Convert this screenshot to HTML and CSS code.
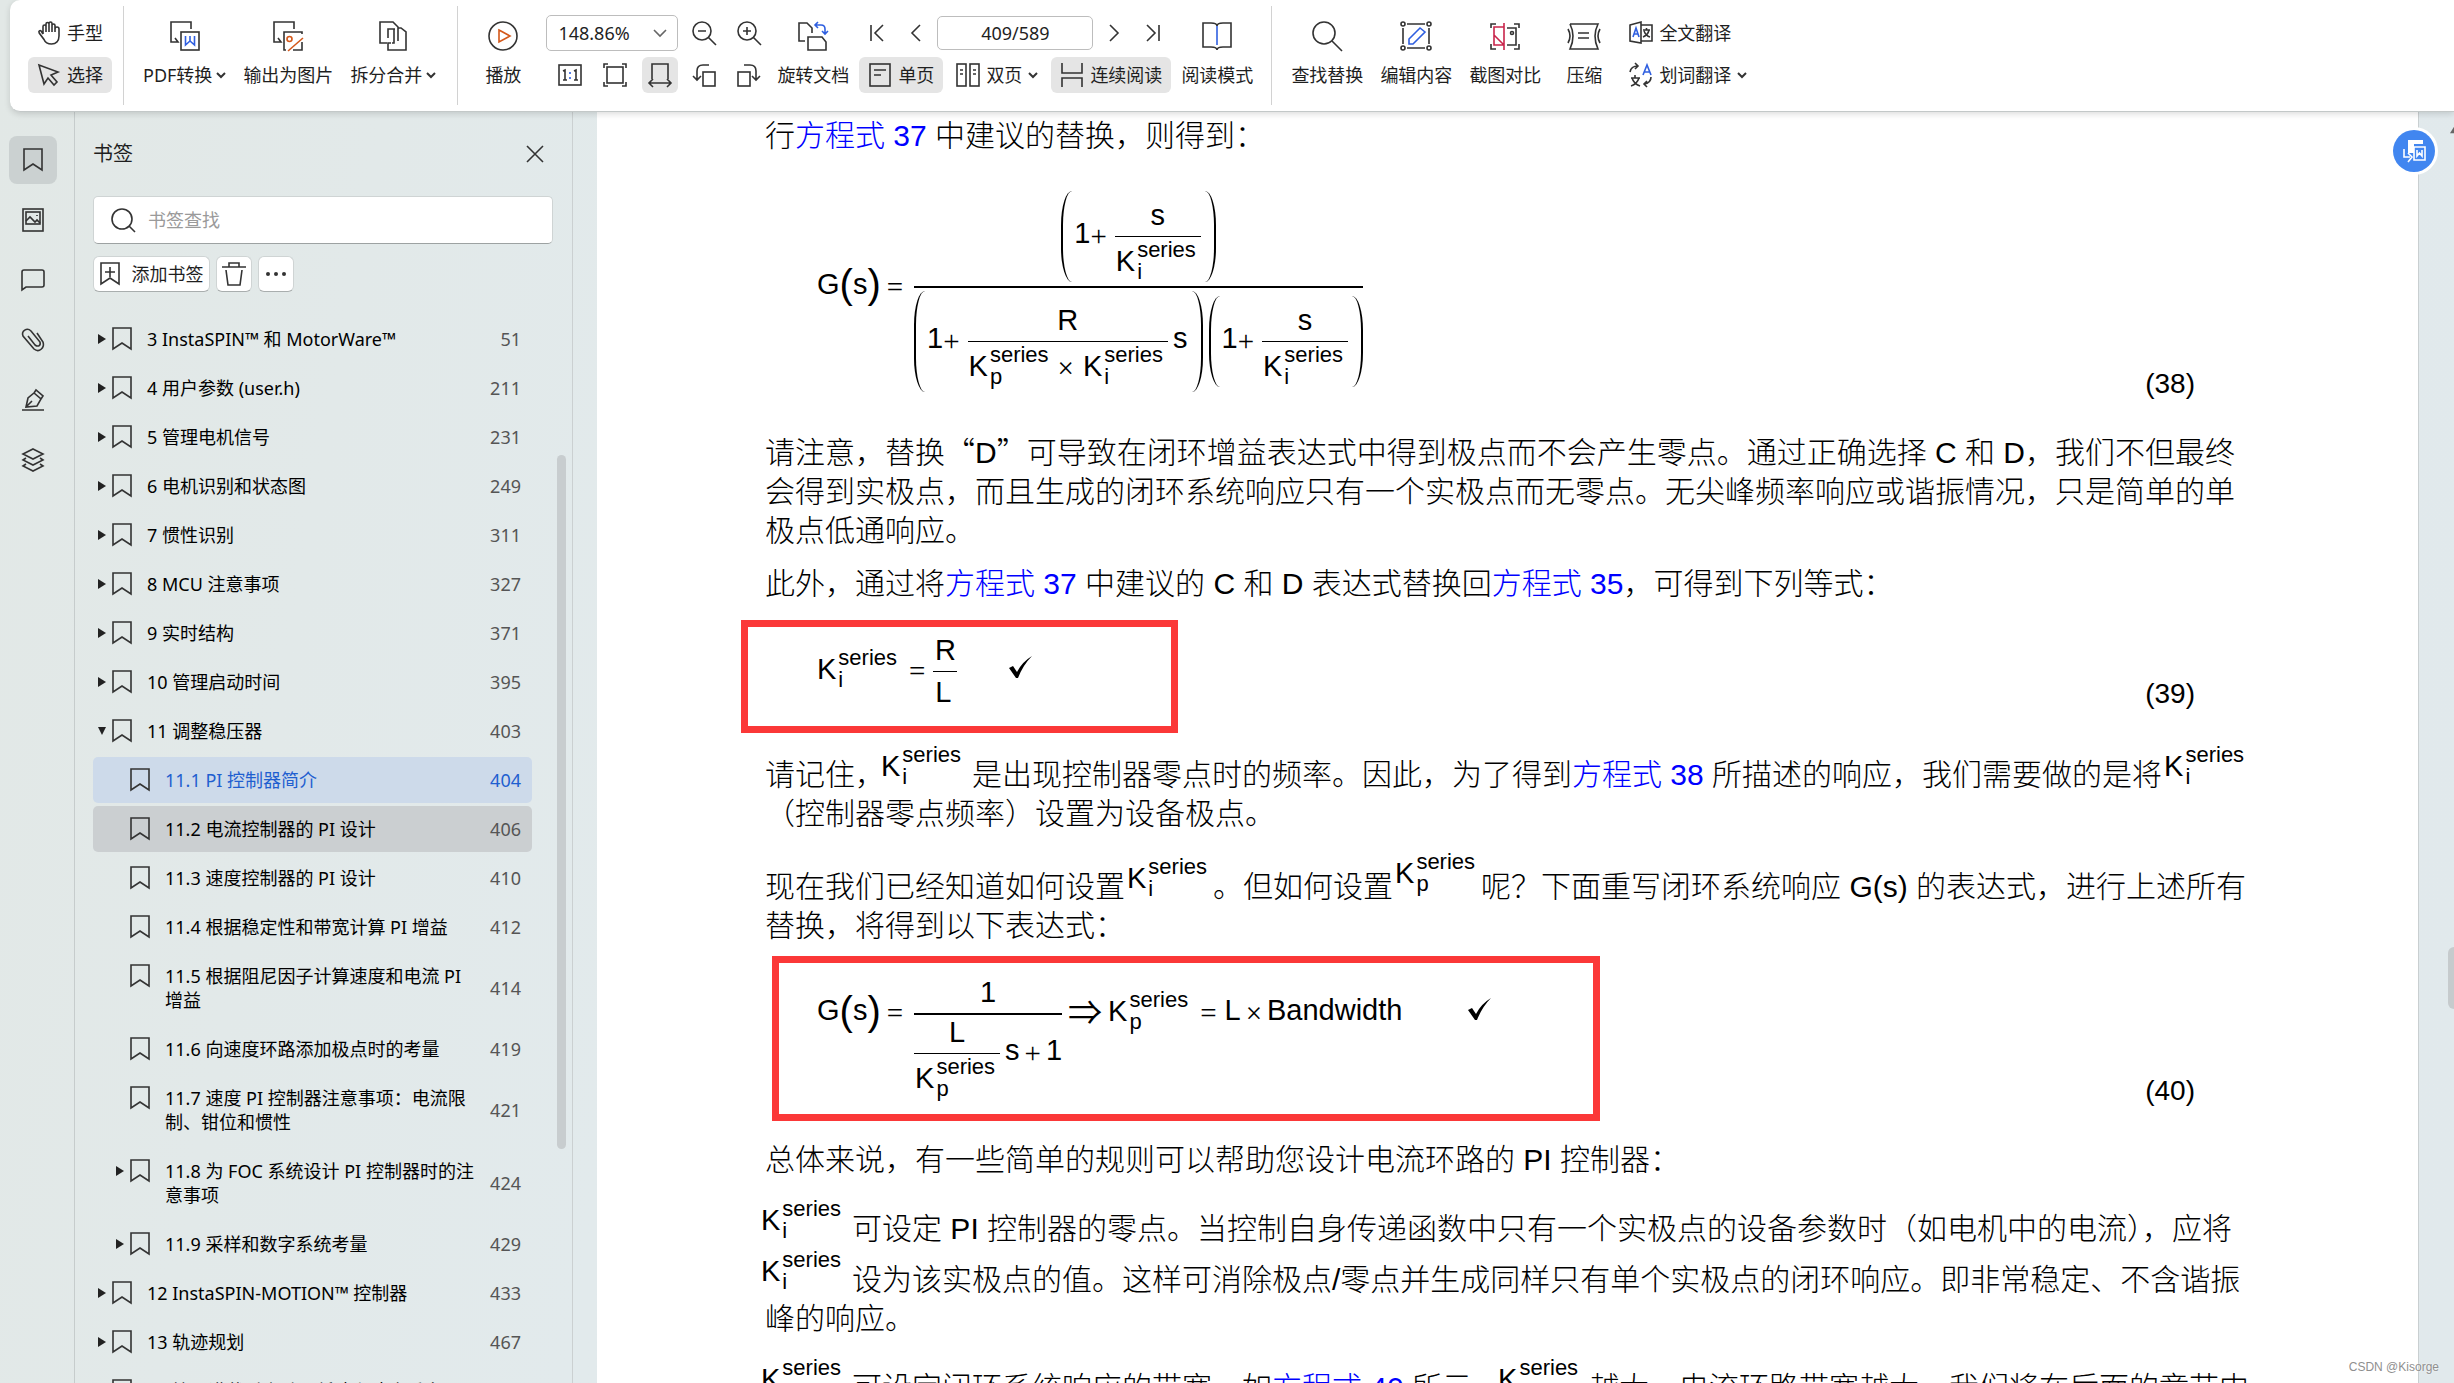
FILE: index.html
```html
<!DOCTYPE html>
<html lang="zh-CN">
<head>
<meta charset="utf-8">
<title>PDF 阅读</title>
<link rel="stylesheet" href="styles.css">
</head>
<body>
<svg class="defs" aria-hidden="true">
  <symbol id="i-mark" viewBox="0 0 20 24"><path d="M1 1h18v21l-9-6-9 6z"/></symbol>
  <symbol id="i-right" viewBox="0 0 8 10"><path d="M0 0l8 5-8 5z"/></symbol>
  <symbol id="i-down" viewBox="0 0 8 10"><path d="M0 1h8l-4 8z"/></symbol>
  <symbol id="i-chev" viewBox="0 0 10 8"><path d="M1 2l4 4 4-4"/></symbol>
</svg>

<header class="toolbar">
  <div class="stack">
    <button class="row-btn"><svg class="i24" viewBox="0 0 24 24"><path d="M6 13V5.500a1.500 1.500 0 0 1 3 0V11V3a1.500 1.500 0 0 1 3 0v8V2.500a1.500 1.500 0 0 1 3 0V11V4.500a1.500 1.500 0 0 1 3 0V11V8a1.500 1.500 0 0 1 4 0v7c0 5-3 8-7.500 8C10 23 8 21 7 18.500L2.200 12c-1-2 .8-3 2-2L6 13"/></svg>手型</button>
    <button class="row-btn is-on"><svg class="i24" viewBox="0 0 24 24"><path d="M2 2l5 19 4-6 6 7 3-3-6-7 7-3z"/></svg>选择</button>
  </div>
  <i class="sep sep-a"></i>
  <button class="big"><svg class="i30" viewBox="0 0 30 30"><path d="M8 21H1V1h20v7M5 17l3 4-3 0"/><rect x="11" y="11" width="18" height="18"/><path class="blue" d="M15.500 15v9l4.500-4 4.500 4v-9M20 15v5"/></svg><span>PDF转换<svg class="chev"><use href="#i-chev"/></svg></span></button>
  <button class="big"><svg class="i30" viewBox="0 0 30 30"><path d="M8 21H1V1h20v7M5 17l3 4-3 0M29 13v-2H11v18h2M20 29h9v-8"/><circle class="orange" cx="16.500" cy="18" r="2.500"/><path class="orange" d="M15 30L30 17"/></svg><span>输出为图片</span></button>
  <button class="big"><svg class="i30" viewBox="0 0 30 30"><path d="M9 22H2V1h13l5 5v14M10 17V8h7M13 22h-3v7h18V11l-5-4h-3"/><path d="M14 22h2V8"/></svg><span>拆分合并<svg class="chev"><use href="#i-chev"/></svg></span></button>
  <i class="sep sep-b"></i>
  <button class="big play"><svg class="i30" viewBox="0 0 30 30"><circle cx="15" cy="15" r="14"/><path class="orange" d="M11 9l11 6-11 6z"/></svg><span>播放</span></button>
  <div class="stack zoom-col">
    <div class="zoom-box"><select aria-label="缩放比例"><option>148.86%</option></select><svg class="zoom-chev" viewBox="0 0 14 8"><path d="M1 1l6 6 6-6"/></svg></div>
    <div class="line-row tools">
      <button class="sq" aria-label="实际大小"><svg class="i24" viewBox="0 0 24 24"><rect x="1" y="2" width="22" height="20"/><path d="M5 8l2-1v10M5 17h4M16 8l2-1v10M16 17h4"/><path class="blue" d="M12 9v2M12 14v2"/></svg></button>
      <button class="sq" aria-label="适合页面"><svg class="i24" viewBox="0 0 24 24"><rect x="4" y="4" width="16" height="16"/><path d="M1 5V1h4M19 1h4v4M23 19v4h-4M5 23H1v-4"/></svg></button>
      <button class="sq is-on" aria-label="适合宽度"><svg class="i24" viewBox="0 0 24 24"><path d="M4 16V1h16v15M1 20h22M5 16l-4 4 4 4M19 16l4 4-4 4"/></svg></button>
    </div>
  </div>
  <div class="stack io-col">
    <div class="line-row tools">
      <button class="sq" aria-label="缩小"><svg class="i24" viewBox="0 0 24 24"><circle cx="10" cy="10" r="9"/><path d="M16.500 16.500L24 24M6 10h8"/></svg></button>
      <button class="sq" aria-label="放大"><svg class="i24" viewBox="0 0 24 24"><circle cx="10" cy="10" r="9"/><path d="M16.500 16.500L24 24M6 10h8M10 6v8"/></svg></button>
    </div>
    <div class="line-row tools">
      <button class="sq" aria-label="向左旋转"><svg class="i24" viewBox="0 0 24 24"><rect x="11" y="9" width="12" height="14"/><path d="M17 2h-6q-6 0-6 6v9M1 13l4 4 4-4"/></svg></button>
      <button class="sq" aria-label="向右旋转"><svg class="i24" viewBox="0 0 24 24"><rect x="1" y="9" width="12" height="14"/><path d="M7 2h6q6 0 6 6v9M15 13l4 4 4-4"/></svg></button>
    </div>
  </div>
  <button class="big rotate"><svg class="i30" viewBox="0 0 30 30"><path d="M7 20H1V2h8l5 5v5M10 16h14l4 5v8H10z"/><path class="blue" d="M17 4h6q4 0 4 4v5M20 1l-3 3 3 3M24 10l3 3 3-3"/></svg><span>旋转文档</span></button>
  <div class="stack nav-col">
    <div class="line-row pager">
      <button class="sq" aria-label="首页"><svg class="i16" viewBox="0 0 16 16"><path d="M2 0v16M14 0L6 8l8 8"/></svg></button>
      <button class="sq" aria-label="上一页"><svg class="i16" viewBox="0 0 16 16"><path d="M12 0L4 8l8 8"/></svg></button>
      <input class="page-no" aria-label="页码" value="409/589">
      <button class="sq" aria-label="下一页"><svg class="i16" viewBox="0 0 16 16"><path d="M4 0l8 8-8 8"/></svg></button>
      <button class="sq" aria-label="末页"><svg class="i16" viewBox="0 0 16 16"><path d="M2 0l8 8-8 8M14 0v16"/></svg></button>
    </div>
    <div class="line-row modes">
      <button class="row-btn is-on"><svg class="i24" viewBox="0 0 24 24"><rect x="2" y="1" width="20" height="22"/><path d="M6 7h12M6 12h7"/></svg>单页</button>
      <button class="row-btn plain"><svg class="i24" viewBox="0 0 24 24"><rect x="1" y="1" width="9" height="22"/><rect x="14" y="1" width="9" height="22"/><path d="M4 7h3M4 11h3M17 7h3M17 11h3"/></svg>双页<svg class="chev"><use href="#i-chev"/></svg></button>
      <button class="row-btn is-on"><svg class="i24" viewBox="0 0 24 24"><path d="M2 0v10h20V0M2 24V15h20v9"/></svg>连续阅读</button>
    </div>
  </div>
  <button class="big"><svg class="i30" viewBox="0 0 30 30"><path d="M1 2h8q6 0 6 3q0-3 6-3h8v24h-8q-6 0-6 3q0-3-6-3H1z"/><path class="blue" d="M15 5v19"/></svg><span>阅读模式</span></button>
  <i class="sep sep-c"></i>
  <button class="big"><svg class="i30" viewBox="0 0 30 30"><circle cx="12" cy="12" r="11"/><path d="M20 20l10 10"/></svg><span>查找替换</span></button>
  <button class="big"><svg class="i32" viewBox="0 0 32 30"><circle cx="3" cy="3" r="2"/><circle cx="29" cy="3" r="2"/><circle cx="3" cy="27" r="2"/><circle cx="29" cy="27" r="2"/><path d="M7 3h18M7 27h18M3 7v16M29 7v16"/><path class="blue" d="M9 23v-5L20 7l5 4-12 12z"/></svg><span>编辑内容</span></button>
  <button class="big"><svg class="i30" viewBox="0 0 30 30"><path d="M1 7V3h5M24 3h5v4M29 23v5h-5M6 28H1v-5M17 7h9v17h-9"/><circle cx="22" cy="12" r="1.500"/><path class="red" d="M14 2v27M14 6H4v18h10M4 14l10 10"/></svg><span>截图对比</span></button>
  <button class="big compress"><svg class="i34" viewBox="0 0 34 30"><path d="M3 3h28q-6 12 0 25H3Q9 15 3 3M11 12h11M11 17h11M1 8q4 7 0 14M33 8q-4 7 0 14"/></svg><span>压缩</span></button>
  <div class="stack trans">
    <button class="row-btn plain"><svg class="i24" viewBox="0 0 24 24"><path d="M1 4l11-3v21L1 20zM12 4h11v16H12"/><path class="blue" d="M4 16l3-9 3 9M5 13h4"/><path d="M14 9h7M17.500 7v2M20 9q-1 5-6 7M15 10q2 5 6 6"/></svg>全文翻译</button>
    <button class="row-btn plain"><svg class="i24" viewBox="0 0 24 24"><path d="M1 9q1-6 8-6M6 0l3 3-3 3M2 15h9M6 12v3M10 15q-2 6-8 8M3 15q2 6 8 8M22 14q0 6-7 7M18 18l-3 3 3 3"/><path class="blue" d="M14 12l4-10 4 10M15 9h6"/></svg>划词翻译<svg class="chev"><use href="#i-chev"/></svg></button>
  </div>
</header>

<div class="workspace">
  <nav class="rail">
    <button class="rail-btn is-on" aria-label="书签"><svg class="mark"><use href="#i-mark"/></svg></button>
    <button class="rail-btn" aria-label="缩略图"><svg class="i24" viewBox="0 0 24 24"><rect x="2" y="1" width="20" height="22"/><rect x="5" y="4" width="14" height="12"/><path d="M5 13l4-4 5 5 2-2 3 3M16 7v1"/></svg></button>
    <button class="rail-btn" aria-label="批注"><svg class="i24" viewBox="0 0 24 24"><path d="M1 22V4q0-2 2-2h18q2 0 2 2v13q0 2-2 2H5z"/></svg></button>
    <button class="rail-btn" aria-label="附件"><svg class="i24" viewBox="0 0 24 24"><path d="M16 5l6 9c2 6-4 11-9 7L2 8C0 3 6-1 10 3l9 11c1 4-2 5-5 3L7 8"/></svg></button>
    <button class="rail-btn" aria-label="签名"><svg class="i24" viewBox="0 0 24 24"><path d="M1 22h22M5 19l2-9 6-5 7 6-4 7zM5 19l6-6M13 5l2-3 7 6-2 3"/></svg></button>
    <button class="rail-btn" aria-label="图层"><svg class="i24" viewBox="0 0 24 24"><path d="M12 1l10 5-10 5L2 6zM5 10l-3 2 10 5 10-5-3-2M5 16l-3 2 10 5 10-5-3-2"/></svg></button>
  </nav>

  <aside class="panel">
    <div class="panel-head"><h2>书签</h2><button class="bare" aria-label="关闭"><svg class="i16" viewBox="0 0 16 16"><path d="M0 0l16 16M16 0L0 16"/></svg></button></div>
    <label class="search"><svg class="i24" viewBox="0 0 24 24"><circle cx="11" cy="11" r="10"/><path d="M18 18l6 6"/></svg><input placeholder="书签查找" aria-label="书签查找"></label>
    <div class="actions">
      <button class="act add"><svg class="mark" viewBox="0 0 20 24"><path d="M1 1h18v21l-9-6-9 6zM10 5v10M5 10h10"/></svg>添加书签</button>
      <button class="act" aria-label="删除"><svg class="i24" viewBox="0 0 24 24"><path d="M0 5h24M7 5V1h10v4M4 8l2 15h12l2-15"/></svg></button>
      <button class="act" aria-label="更多"><svg class="i24 solid" viewBox="0 0 24 24"><circle cx="4" cy="12" r="2"/><circle cx="12" cy="12" r="2"/><circle cx="20" cy="12" r="2"/></svg></button>
    </div>
    <ul class="tree">
      <li><a href="#"><svg class="tri"><use href="#i-right"/></svg><svg class="mark"><use href="#i-mark"/></svg><span class="title">3 InstaSPIN™ 和 MotorWare™</span><span class="num">51</span></a></li>
      <li><a href="#"><svg class="tri"><use href="#i-right"/></svg><svg class="mark"><use href="#i-mark"/></svg><span class="title">4 用户参数 (user.h)</span><span class="num">211</span></a></li>
      <li><a href="#"><svg class="tri"><use href="#i-right"/></svg><svg class="mark"><use href="#i-mark"/></svg><span class="title">5 管理电机信号</span><span class="num">231</span></a></li>
      <li><a href="#"><svg class="tri"><use href="#i-right"/></svg><svg class="mark"><use href="#i-mark"/></svg><span class="title">6 电机识别和状态图</span><span class="num">249</span></a></li>
      <li><a href="#"><svg class="tri"><use href="#i-right"/></svg><svg class="mark"><use href="#i-mark"/></svg><span class="title">7 惯性识别</span><span class="num">311</span></a></li>
      <li><a href="#"><svg class="tri"><use href="#i-right"/></svg><svg class="mark"><use href="#i-mark"/></svg><span class="title">8 MCU 注意事项</span><span class="num">327</span></a></li>
      <li><a href="#"><svg class="tri"><use href="#i-right"/></svg><svg class="mark"><use href="#i-mark"/></svg><span class="title">9 实时结构</span><span class="num">371</span></a></li>
      <li><a href="#"><svg class="tri"><use href="#i-right"/></svg><svg class="mark"><use href="#i-mark"/></svg><span class="title">10 管理启动时间</span><span class="num">395</span></a></li>
      <li><a href="#"><svg class="tri"><use href="#i-down"/></svg><svg class="mark"><use href="#i-mark"/></svg><span class="title">11 调整稳压器</span><span class="num">403</span></a></li>
      <li class="sub current"><a href="#"><svg class="tri"></svg><svg class="mark"><use href="#i-mark"/></svg><span class="title">11.1 PI 控制器简介</span><span class="num">404</span></a></li>
      <li class="sub hover"><a href="#"><svg class="tri"></svg><svg class="mark"><use href="#i-mark"/></svg><span class="title">11.2 电流控制器的 PI 设计</span><span class="num">406</span></a></li>
      <li class="sub"><a href="#"><svg class="tri"></svg><svg class="mark"><use href="#i-mark"/></svg><span class="title">11.3 速度控制器的 PI 设计</span><span class="num">410</span></a></li>
      <li class="sub"><a href="#"><svg class="tri"></svg><svg class="mark"><use href="#i-mark"/></svg><span class="title">11.4 根据稳定性和带宽计算 PI 增益</span><span class="num">412</span></a></li>
      <li class="sub"><a href="#"><svg class="tri"></svg><svg class="mark"><use href="#i-mark"/></svg><span class="title">11.5 根据阻尼因子计算速度和电流 PI 增益</span><span class="num">414</span></a></li>
      <li class="sub"><a href="#"><svg class="tri"></svg><svg class="mark"><use href="#i-mark"/></svg><span class="title">11.6 向速度环路添加极点时的考量</span><span class="num">419</span></a></li>
      <li class="sub"><a href="#"><svg class="tri"></svg><svg class="mark"><use href="#i-mark"/></svg><span class="title">11.7 速度 PI 控制器注意事项：电流限制、钳位和惯性</span><span class="num">421</span></a></li>
      <li class="sub"><a href="#"><svg class="tri"><use href="#i-right"/></svg><svg class="mark"><use href="#i-mark"/></svg><span class="title">11.8 为 FOC 系统设计 PI 控制器时的注意事项</span><span class="num">424</span></a></li>
      <li class="sub"><a href="#"><svg class="tri"><use href="#i-right"/></svg><svg class="mark"><use href="#i-mark"/></svg><span class="title">11.9 采样和数字系统考量</span><span class="num">429</span></a></li>
      <li><a href="#"><svg class="tri"><use href="#i-right"/></svg><svg class="mark"><use href="#i-mark"/></svg><span class="title">12 InstaSPIN-MOTION™ 控制器</span><span class="num">433</span></a></li>
      <li><a href="#"><svg class="tri"><use href="#i-right"/></svg><svg class="mark"><use href="#i-mark"/></svg><span class="title">13 轨迹规划</span><span class="num">467</span></a></li>
      <li><a href="#"><svg class="tri"><use href="#i-right"/></svg><svg class="mark"><use href="#i-mark"/></svg><span class="title">14 管理满载时启动、低速和速度反向</span><span class="num">485</span></a></li>
    </ul>
    <i class="panel-thumb"></i>
  </aside>

  <main class="viewer">
    <article class="page">
      <p>行<a href="#">方程式 37</a> 中建议的替换，则得到：</p>

      <div class="formula f38">
        <div class="math">
          <span class="t">G</span><span class="par">(</span><span class="t">s</span><span class="par">)</span><span class="op eq">=</span>
          <div class="frac main">
            <div class="mrow">
              <i class="big-par l"></i><span class="t">1</span><span class="op">+</span>
              <div class="frac"><div class="num-part">s</div><i class="bar"></i><div class="den-part"><span class="k"><span class="base">K</span><span class="idx"><span>series</span><span>i</span></span></span></div></div>
              <i class="big-par r"></i>
            </div>
            <i class="bar thick"></i>
            <div class="mrow">
              <i class="big-par l tall"></i><span class="t">1</span><span class="op">+</span>
              <div class="frac"><div class="num-part">R</div><i class="bar"></i><div class="den-part"><span class="k"><span class="base">K</span><span class="idx"><span>series</span><span>p</span></span></span><span class="op times">×</span><span class="k"><span class="base">K</span><span class="idx"><span>series</span><span>i</span></span></span></div></div>
              <span class="t after">s</span><i class="big-par r tall"></i>
              <i class="big-par l next"></i><span class="t">1</span><span class="op">+</span>
              <div class="frac"><div class="num-part">s</div><i class="bar"></i><div class="den-part"><span class="k"><span class="base">K</span><span class="idx"><span>series</span><span>i</span></span></span></div></div>
              <i class="big-par r"></i>
            </div>
          </div>
        </div>
        <span class="tag">(38)</span>
      </div>

      <p class="p1">请注意，替换<span class="cjk">“</span>D<span class="cjk">”</span>可导致在闭环增益表达式中得到极点而不会产生零点。通过正确选择 C 和 D，我们不但最终<br>会得到实极点，而且生成的闭环系统响应只有一个实极点而无零点。无尖峰频率响应或谐振情况，只是简单的单<br>极点低通响应。</p>
      <p class="p2">此外，通过将<a href="#">方程式 37</a> 中建议的 C 和 D 表达式替换回<a href="#">方程式 35</a>，可得到下列等式：</p>

      <div class="formula f39">
        <div class="math framed">
          <span class="k"><span class="base">K</span><span class="idx"><span>series</span><span>i</span></span></span><span class="op eq wide">=</span>
          <div class="frac short"><div class="num-part">R</div><i class="bar"></i><div class="den-part">L</div></div>
          <svg class="tick" viewBox="0 0 24 22"><path d="M0 12l4-2 4 6Q13 6 23 0Q14 9 9 22H7z"/></svg>
        </div>
        <span class="tag">(39)</span>
      </div>

      <p class="p3">请记住，<span class="k in tight"><span class="base">K</span><span class="idx"><span>series</span><span>i</span></span></span>是出现控制器零点时的频率。因此，为了得到<a href="#">方程式 38</a> 所描述的响应，我们需要做的是将<span class="k in"><span class="base">K</span><span class="idx"><span>series</span><span>i</span></span></span><br>（控制器零点频率）设置为设备极点。</p>
      <p class="p4">现在我们已经知道如何设置<span class="k in"><span class="base">K</span><span class="idx"><span>series</span><span>i</span></span></span>。但如何设置<span class="k in up"><span class="base">K</span><span class="idx"><span>series</span><span>p</span></span></span>呢？下面重写闭环系统响应 G(s) 的表达式，进行上述所有<br>替换，将得到以下表达式：</p>

      <div class="formula f40">
        <div class="math framed">
          <span class="t">G</span><span class="par">(</span><span class="t">s</span><span class="par">)</span><span class="op eq">=</span>
          <div class="frac nest">
            <div class="num-part">1</div><i class="bar thick"></i>
            <div class="mrow">
              <div class="frac"><div class="num-part">L</div><i class="bar"></i><div class="den-part"><span class="k"><span class="base">K</span><span class="idx"><span>series</span><span>p</span></span></span></div></div>
              <span class="t after">s</span><span class="op mid">+</span><span class="t">1</span>
            </div>
          </div>
          <span class="op arrow">⇒</span><span class="k"><span class="base">K</span><span class="idx"><span>series</span><span>p</span></span></span><span class="op eq wide">=</span><span class="t">L</span><span class="op times">×</span><span class="t">Bandwidth</span>
          <svg class="tick far" viewBox="0 0 24 22"><path d="M0 12l4-2 4 6Q13 6 23 0Q14 9 9 22H7z"/></svg>
        </div>
        <span class="tag">(40)</span>
      </div>

      <p class="p5">总体来说，有一些简单的规则可以帮助您设计电流环路的 PI 控制器：</p>
      <p class="p6"><span class="k in tight"><span class="base">K</span><span class="idx"><span>series</span><span>i</span></span></span>可设定 PI 控制器的零点。当控制自身传递函数中只有一个实极点的设备参数时（如电机中的电流），应将</p>
      <p class="p7"><span class="k in tight"><span class="base">K</span><span class="idx"><span>series</span><span>i</span></span></span>设为该实极点的值。这样可消除极点/零点并生成同样只有单个实极点的闭环响应。即非常稳定、不含谐振<br>峰的响应。</p>
      <p class="p8"><span class="k in tight"><span class="base">K</span><span class="idx"><span>series</span><span>p</span></span></span>可设定闭环系统响应的带宽。如<a href="#">方程式 40</a> 所示，<span class="k in tight"><span class="base">K</span><span class="idx"><span>series</span><span>p</span></span></span>越大，电流环路带宽越大。我们将在后面的章节中</p>
    </article>
    <button class="float-btn" aria-label="转换为 Word"><svg class="i24" viewBox="0 0 24 24"><path class="fill" d="M6 1h15v4h-9v9H6z"/><path d="M12 8h11v13H12zM15 11v6l2.500-3 2.500 3v-6M2 10v8h6M6 14l4 4-4 5"/></svg></button>
    <svg class="view-up"><use href="#i-right"/></svg>
    <i class="view-thumb"></i>
    <span class="watermark">CSDN @Kisorge</span>
  </main>
</div>
</body>
</html>
```

FILE: styles.css
```css
* { box-sizing: border-box; }

body {
  margin: 0;
  height: 100vh;
  overflow: hidden;
  display: flex;
  flex-direction: column;
  background: linear-gradient(100deg, #e2e8e6 0%, #e2eaec 30%, #e1e9ec 100%);
  font: 400 18px/24px "Noto Sans", "Noto Sans CJK SC", sans-serif;
  color: #1f1f1f;
}

button, input, select { font: inherit; color: inherit; }
button { border: 0; padding: 0; background: none; }
a { color: inherit; text-decoration: none; }
p, h2, ul { margin: 0; padding: 0; }
.defs { display: none; }

svg { flex: none; fill: none; stroke: #333; stroke-width: 1.6; overflow: visible; }
.blue { stroke: #2f5fe0; }
.orange { stroke: #d4581a; }
.red { stroke: #c9254b; }
.i16 { width: 16px; height: 16px; }
.i24 { width: 24px; height: 24px; }
.i30 { width: 30px; height: 30px; }
.i32 { width: 32px; height: 30px; }
.i34 { width: 34px; height: 30px; }
.mark { width: 20px; height: 24px; }
.chev { width: 10px; height: 8px; stroke-width: 2; }

/* Toolbar */
.toolbar {
  position: relative;
  z-index: 2;
  flex: none;
  display: flex;
  height: 112px;
  margin-left: 10px;
  padding: 15px 0 0 18px;
  background: #fff;
  border-bottom: 1px solid #c3c8c8;
  border-radius: 10px 0 0 10px;
  box-shadow: 0 2px 6px rgba(0, 0, 0, .14);
  white-space: nowrap;
}
.stack { display: flex; flex-direction: column; gap: 6px; }
.line-row { display: flex; height: 36px; align-items: center; }
.sep { width: 1px; height: 99px; margin-top: -9px; background: #d2d2d2; }
.sep-a { margin-left: 11px; margin-right: 19px; }
.sep-b { margin-left: 4px; margin-right: 27px; }
.sep-c { margin-left: 1px; margin-right: 19px; }
.row-btn {
  display: flex;
  align-items: center;
  gap: 6px;
  height: 36px;
  padding: 0 9px;
  border-radius: 6px;
}
.row-btn.plain { padding: 0; }
.is-on { background: #e5e5e5; }
.big {
  display: flex;
  flex-direction: column;
  align-items: center;
  gap: 6px;
  height: 78px;
  padding-top: 6px;
  margin-right: 17px;
}
.big span { display: flex; align-items: center; gap: 4px; height: 36px; }
.big.play { margin-right: 25px; }
.big.rotate { margin: 0 10px; }
.big.compress { margin-left: 8px; margin-right: 27px; }
.zoom-col { width: 132px; }
.zoom-box { display: flex; align-items: center; height: 36px; border: 1px solid #bdbdbd; border-radius: 5px; padding: 0 10px 0 11px; }
.zoom-box select { flex: 1; min-width: 0; appearance: none; border: 0; background: none; padding: 0; }
.zoom-chev { width: 14px; height: 8px; stroke: #666; }
.tools { gap: 9px; justify-content: flex-end; }
.sq { display: flex; align-items: center; justify-content: center; width: 36px; height: 36px; border-radius: 6px; }
.io-col { margin-left: 8px; }
.nav-col { width: 312px; margin-right: 10px; }
.pager { justify-content: space-between; }
.page-no { width: 156px; height: 34px; border: 1px solid #bdbdbd; border-radius: 5px; text-align: center; padding: 0; }
.modes { justify-content: space-between; }

/* Work area */
.workspace { flex: 1; min-height: 0; display: flex; }
.rail { width: 75px; border-right: 1px solid #c6cccc; padding: 24px 0 0 9px; display: flex; flex-direction: column; gap: 12px; }
.rail-btn { display: flex; align-items: center; justify-content: center; width: 48px; height: 48px; border-radius: 8px; }
.rail-btn.is-on { background: #cbd1d1; }

.panel { position: relative; width: 498px; padding: 24px 19px 0 18px; border-right: 1px solid #cbd0d1; overflow: hidden; }
.panel-head { display: flex; align-items: center; justify-content: space-between; height: 36px; padding-right: 10px; }
.panel-head h2 { font-size: 20px; font-weight: inherit; }
.bare { display: flex; }
.search { display: flex; align-items: center; gap: 13px; height: 48px; margin-top: 24px; padding: 0 17px; background: #fff; border: 1px solid #cfd4d4; border-bottom-color: #9da2a2; border-radius: 5px; }
.search input { flex: 1; min-width: 0; border: 0; outline: 0; padding: 0; background: none; }
.search input::placeholder { color: #9a9a9a; }
.actions { display: flex; gap: 6px; margin-top: 12px; }
.act { display: flex; align-items: center; justify-content: center; gap: 12px; width: 36px; height: 36px; background: #fff; border: 1px solid #cfd4d4; border-bottom-color: #a9aeae; border-radius: 6px; }
.act.add { width: 117px; }
.solid { fill: #333; stroke: none; }

.tree { list-style: none; margin-top: 24px; width: 439px; display: flex; flex-direction: column; gap: 3px; color: #000; }
.tree a { display: flex; padding: 11px 11px 11px 5px; border-radius: 5px; }
.tree .sub a { padding-left: 23px; }
.tree .tri { width: 8px; height: 10px; margin: 7px 6px 0 0; fill: #222; stroke: none; }
.tree .mark { margin-right: 15px; }
.tree .title { flex: 1; }
.tree .num { width: 40px; text-align: right; align-self: center; color: #555; }
.tree .current a { background: #cddaea; color: #1f5fd0; }
.tree .current .num { color: #1f5fd0; }
.tree .hover a { background: #cbcfd1; }
.panel-thumb { position: absolute; right: 6px; top: 343px; width: 9px; height: 694px; border-radius: 5px; background: #c8cdcf; }

/* Document */
.viewer { position: relative; flex: 1; min-width: 0; padding: 0 35px 0 24px; overflow: hidden; }
.page {
  min-height: 100%;
  padding: 4px 223px 0 168px;
  background: #fff;
  border-right: 1px solid #c9cfd1;
  font: 30px/39px "Liberation Sans", "Noto Sans CJK SC", sans-serif;
  color: #000;
  white-space: nowrap;
}
.page p { font-weight: 300; }
.page p a { color: #00f; }
.cjk { font-family: "Noto Sans CJK SC", sans-serif; line-height: 20px; }
.p2 { margin-top: 14px; }
.p3 { margin-top: 22px; }
.p4 { margin-top: 34px; }
.p5 { margin-top: 19px; }
.p6 { margin-top: 30px; }
.p7 { margin-top: 12px; }
.p8 { margin-top: 30px; }

.formula { display: flex; justify-content: space-between; align-items: flex-end; font-size: 29px; line-height: 29px; }
.tag { font-size: 28px; line-height: 30px; }
.f38 { margin: 27px 0 41px 52px; }
.f38 .tag { margin-bottom: -7px; }
.f39 { margin: 17px 0 0 -24px; }
.f39 .tag { margin-bottom: 24px; }
.f40 { margin: 11px 0 0 7px; }
.f40 .tag { margin-bottom: 15px; }

.math, .mrow { display: flex; align-items: center; }
.framed { border: 7px solid #fb3838; }
.f39 .framed { width: 437px; height: 113px; padding: 0 0 10px 69px; }
.f40 .framed { width: 828px; height: 165px; padding: 0 0 50px 38px; }

.t { padding-bottom: 6px; }
.t.after { padding-left: 5px; }
.par { font-size: 40px; line-height: 40px; padding-bottom: 6px; }
.op { font-family: "Liberation Serif", serif; padding: 0 8px 0 0; }
.op.eq { padding: 0 11px 0 6px; }
.op.wide { padding: 0 8px 0 12px; }
.op.times { padding: 0 5px; }
.op.mid { padding: 0 5px; }
.op.arrow { font-family: "DejaVu Sans", sans-serif; font-size: 34px; font-weight: 200; padding: 0 6px; }
.math > .k { padding-bottom: 6px; }

.frac { display: flex; flex-direction: column; align-items: center; }
.num-part { height: 46px; padding-bottom: 6px; display: flex; align-items: flex-end; }
.den-part { height: 46px; padding: 2px 5px 0 1px; display: flex; align-items: flex-start; }
.den-part .op { padding: 10px 9px 0; }
.bar { width: 100%; height: 1px; background: #000; }
.bar.thick { height: 2px; }
.frac.main { padding-top: 8px; gap: 3px; }
.frac.short { width: 24px; }
.frac.short .num-part { height: 40px; }
.frac.short .den-part { height: 40px; padding-top: 6px; }
.frac.nest { margin-bottom: -39px; }
.frac.nest .mrow { margin-top: -8px; }

.big-par { width: 11px; height: 91px; border: 0 solid #000; }
.big-par.tall { height: 101px; }
.big-par.l { border-left-width: 2px; border-radius: 11px 0 0 11px / 34px 0 0 34px; margin-right: 2px; }
.big-par.r { border-right-width: 2px; border-radius: 0 11px 11px 0 / 0 34px 34px 0; margin-left: 4px; }
.big-par.next { margin-left: 6px; }

.k { display: inline-flex; align-items: flex-start; font-size: 29px; line-height: 29px; font-weight: 400; }
.k .base { padding-top: 8px; }
.k .idx { display: flex; flex-direction: column; padding-left: 2px; font-size: 22px; line-height: 22px; }
.k.in { margin: -20px 6px -20px 2px; vertical-align: 9px; }
.k.tight { margin-left: -4px; margin-right: 11px; }
.k.in.up { vertical-align: 14px; }

.tick { width: 24px; height: 22px; fill: #000; stroke: none; margin: 0 0 10px 52px; }
.tick.far { margin-left: 66px; }

/* Overlays on the document */
.float-btn { position: absolute; top: 18px; right: 19px; display: flex; align-items: center; justify-content: center; width: 42px; height: 42px; border-radius: 50%; background: #4186f0; box-shadow: 0 0 0 3px #fff; }
.float-btn svg { stroke: #fff; }
.float-btn .fill { fill: #fff; stroke: none; }
.view-up { position: absolute; right: -4px; top: 14px; width: 8px; height: 8px; fill: #666; stroke: none; rotate: -90deg; }
.view-thumb { position: absolute; right: -6px; top: 835px; width: 12px; height: 62px; border-radius: 6px; background: #c6cbcd; }
.watermark { position: absolute; right: 15px; bottom: 4px; font: 12px/24px "Liberation Sans", sans-serif; color: #8f8f8f; text-shadow: 0 0 2px #fff; }
```
